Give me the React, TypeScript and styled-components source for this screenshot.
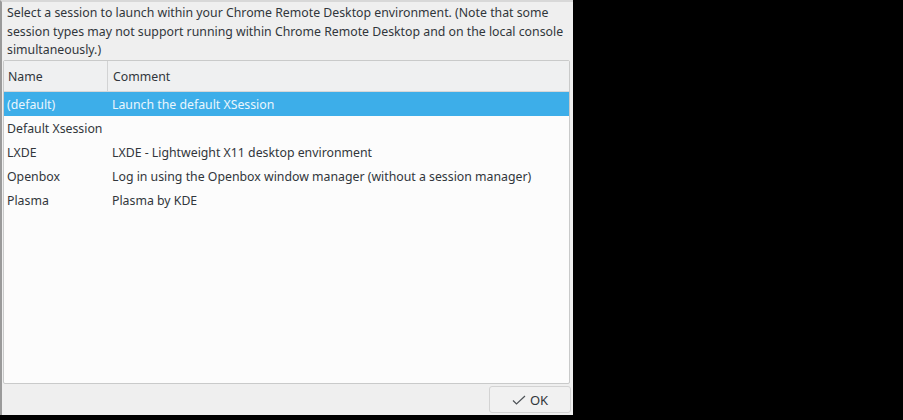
import React from "react";
import styled, { createGlobalStyle } from "styled-components";

const GlobalStyle = createGlobalStyle`
  *, *::before, *::after {
    box-sizing: border-box;
  }
  html, body {
    margin: 0;
    padding: 0;
    background: #000;
  }
  body {
    font-family: "Noto Sans", "Open Sans", sans-serif;
    font-size: 12.3px;
    color: #31363b;
  }
`;

const Dialog = styled.div`
  width: 573px;
  height: 415px;
  background: #efefef;
  border-left: 2px solid #9a9a9a;
  border-top: 2px solid #d8d8d8;
  display: flex;
  flex-direction: column;
  padding: 0 3px 0 1px;
`;

const Intro = styled.p`
  margin: 0;
  padding: 2px 4px 0 4px;
  line-height: 18.5px;
  white-space: nowrap;
  height: 58px;
`;

const ListBox = styled.div`
  flex: 1;
  display: flex;
  flex-direction: column;
  background: #fcfcfc;
  border: 1px solid #c9caca;
  border-radius: 2px;
`;

const HeaderRow = styled.div`
  display: grid;
  grid-template-columns: 104px 1fr;
  height: 31px;
  background: #eff0f1;
  border-bottom: 1px solid #d6d7d8;
`;

const HeaderCell = styled.div<{ $divider?: boolean }>`
  display: flex;
  align-items: center;
  padding-left: 4px;
  border-right: ${(p) => (p.$divider ? "1px solid #d2d3d4" : "none")};
`;

const Row = styled.div<{ $selected?: boolean }>`
  display: grid;
  grid-template-columns: 105px 1fr;
  height: 24px;
  align-items: center;
  background: ${(p) => (p.$selected ? "#3daee9" : "transparent")};
  color: ${(p) => (p.$selected ? "#eaf6fd" : "#31363b")};
`;

const Cell = styled.div`
  padding-left: 3px;
  white-space: nowrap;
`;

const Footer = styled.div`
  height: 31px;
  display: flex;
  justify-content: flex-end;
  align-items: center;
`;

const Button = styled.button`
  width: 82px;
  height: 27px;
  display: flex;
  align-items: center;
  justify-content: center;
  gap: 4px;
  font: inherit;
  font-size: 13px;
  color: #31363b;
  background: #f1f1f1;
  border: 1px solid #d3d3d3;
  border-radius: 3px;
  margin-right: -1px;
  padding: 0;
`;

const sessions = [
  { name: "(default)", comment: "Launch the default XSession" },
  { name: "Default Xsession", comment: "" },
  { name: "LXDE", comment: "LXDE - Lightweight X11 desktop environment" },
  { name: "Openbox", comment: "Log in using the Openbox window manager (without a session manager)" },
  { name: "Plasma", comment: "Plasma by KDE" },
];

export default function App() {
  return (
    <>
      <GlobalStyle />
      <Dialog>
        <Intro>
          Select a session to launch within your Chrome Remote Desktop environment. (Note that some
          <br />
          session types may not support running within Chrome Remote Desktop and on the local console
          <br />
          simultaneously.)
        </Intro>
        <ListBox>
          <HeaderRow>
            <HeaderCell $divider>Name</HeaderCell>
            <HeaderCell style={{ paddingLeft: 5 }}>Comment</HeaderCell>
          </HeaderRow>
          {sessions.map((s, i) => (
            <Row key={s.name} $selected={i === 0}>
              <Cell>{s.name}</Cell>
              <Cell>{s.comment}</Cell>
            </Row>
          ))}
        </ListBox>
        <Footer>
          <Button>
            <svg width="14" height="10" viewBox="0 0 14 10">
              <path d="M1 5.5 L4.5 9 L13 1" fill="none" stroke="#4d5257" strokeWidth="1.2" />
            </svg>
            OK
          </Button>
        </Footer>
      </Dialog>
    </>
  );
}
